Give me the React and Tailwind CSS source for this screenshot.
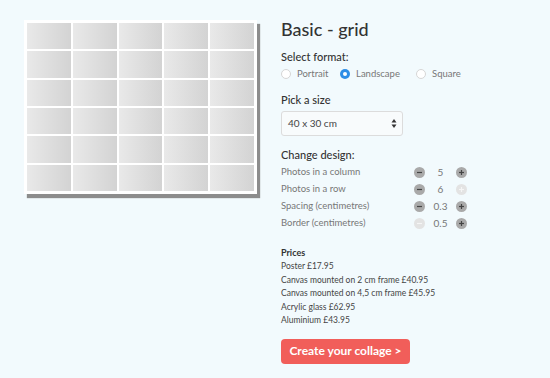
import React, { useState } from 'react';

const rows = [
  { label: 'Photos in a column', value: '5', minus: true, plus: true },
  { label: 'Photos in a row', value: '6', minus: true, plus: false },
  { label: 'Spacing (centimetres)', value: '0.3', minus: true, plus: true },
  { label: 'Border (centimetres)', value: '0.5', minus: false, plus: true },
];

const prices = [
  'Poster £17.95',
  'Canvas mounted on 2 cm frame £40.95',
  'Canvas mounted on 4,5 cm frame £45.95',
  'Acrylic glass £62.95',
  'Aluminium £43.95',
];

const formats = [
  { name: 'Portrait', width: 'w-[59px]' },
  { name: 'Landscape', width: 'w-[76px]' },
  { name: 'Square', width: 'w-[60px]' },
];

const RoundButton = ({ kind, enabled }) => (
  <span
    className={`flex items-center justify-center w-[11px] h-[11px] rounded-full ${
      enabled ? 'bg-[#a9a9a9] text-[#444]' : 'bg-[#e3e3e3] text-[#f5f5f5]'
    }`}
  >
    <svg width="7" height="7" viewBox="0 0 7 7">
      <path d="M1 3.5h5" stroke="currentColor" strokeWidth="1.2" />
      {kind === 'plus' && <path d="M3.5 1v5" stroke="currentColor" strokeWidth="1.2" />}
    </svg>
  </span>
);

const Radio = ({ checked, label, width, onClick }) => (
  <button onClick={onClick} className={`flex items-center gap-[6px] ${width}`}>
    {checked ? (
      <span className="w-[10px] h-[10px] rounded-full bg-[#2f8ee6] flex items-center justify-center">
        <span className="w-[4px] h-[4px] rounded-full bg-white" />
      </span>
    ) : (
      <span className="w-[10px] h-[10px] rounded-full border border-[#d6d6d6] bg-white" />
    )}
    <span className="text-[9.5px] text-[#777]">{label}</span>
  </button>
);

export default function App() {
  const [format, setFormat] = useState('Landscape');

  return (
    <div
      className="w-[550px] h-[378px] bg-[#f2fafd] flex text-[#333]"
      style={{ fontFamily: 'Lato, "Noto Sans", sans-serif' }}
    >
      <div className="pt-[20px] pl-[24px]">
        <div className="w-[233px] h-[174px] bg-white p-[3px] grid grid-cols-5 grid-rows-6 gap-[2px] shadow-[3px_4px_1px_#8c8c8c]">
          {Array.from({ length: 30 }).map((_, i) => (
            <div key={i} className="bg-linear-to-r from-[#e9e9e9] to-[#d3d3d3]" />
          ))}
        </div>
      </div>

      <div className="ml-[24px] flex flex-col">
        <h1 className="mt-[17px] text-[18px] leading-[24px] font-medium text-[#333]">Basic - grid</h1>

        <div className="mt-[8px] text-[11px] leading-[16px] font-medium">Select format:</div>
        <div className="mt-[1px] h-[16px] flex items-center">
          {formats.map((f) => (
            <Radio
              key={f.name}
              label={f.name}
              width={f.width}
              checked={format === f.name}
              onClick={() => setFormat(f.name)}
            />
          ))}
        </div>

        <div className="mt-[10px] text-[11px] leading-[16px] font-medium">Pick a size</div>
        <div className="mt-[3px] w-[122px] h-[25px] border border-[#dcdcdc] rounded-[3px] bg-[#f8fbfc] flex items-center justify-between pl-[6px] pr-[5px]">
          <span className="text-[10px] text-[#444]">40 x 30 cm</span>
          <svg width="6" height="11" viewBox="0 0 6 11">
            <path d="M3 1L5.5 4.5H0.5Z" fill="#333" />
            <path d="M3 10L5.5 6.5H0.5Z" fill="#333" />
          </svg>
        </div>

        <div className="mt-[11px] text-[11px] leading-[16px] font-medium">Change design:</div>
        <div className="mt-[1px] flex flex-col">
          {rows.map((r) => (
            <div key={r.label} className="h-[17px] flex items-center w-[186px]">
              <span className="flex-1 text-[9.5px] text-[#777]">{r.label}</span>
              <RoundButton kind="minus" enabled={r.minus} />
              <span className="w-[31px] text-center text-[10px] text-[#777]">{r.value}</span>
              <RoundButton kind="plus" enabled={r.plus} />
            </div>
          ))}
        </div>

        <div className="mt-[14px] text-[9px] leading-[14px] font-bold text-[#333]">Prices</div>
        {prices.map((p) => (
          <div key={p} className="text-[8.5px] leading-[13.5px] text-[#444]">{p}</div>
        ))}

        <button className="mt-[11px] w-[129px] h-[25px] rounded-[4px] bg-[#f15e5a] text-white text-[12px] font-bold">
          Create your collage &gt;
        </button>
      </div>
    </div>
  );
}
